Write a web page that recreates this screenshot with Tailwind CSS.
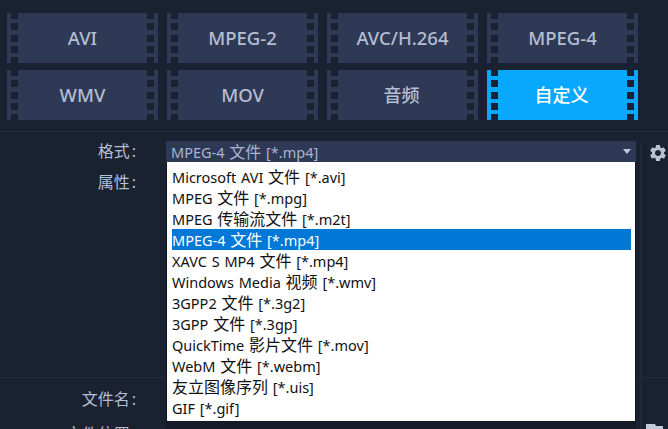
<!DOCTYPE html>
<html lang="zh-CN">

<head>
  <meta charset="UTF-8">
  <title>Export</title>
  <script src="https://cdn.jsdelivr.net/npm/@tailwindcss/browser@4"></script>
</head>

<body class="bg-[#1a2232] overflow-hidden">
  <div class="relative h-[429px] w-[668px] overflow-hidden font-['Noto_Sans','Noto_Sans_CJK_SC',sans-serif]">
    <!-- Format tiles -->
    <div id="tiles" class="grid grid-cols-[repeat(4,151px)] auto-rows-[50px] gap-x-[9px] gap-y-[7px] pl-[7px] pt-[13px]"></div>
    <div class="mt-[11px] h-px bg-[#252e41]"></div>

    <!-- Form -->
    <div class="pt-[9px]">
      <div class="flex h-[21px] items-center">
        <div class="w-[136px] text-right text-[16px] leading-[21px] text-[#b5bdd3]">格式<span class="ml-[2px]">:</span></div>
        <div class="ml-[30px] flex h-[21px] w-[470px] items-center justify-between rounded-t-[2px] bg-[#2e3955] px-[5px]">
          <span class="pt-px text-[14.5px] leading-[21px] text-[#a9b4d2] [word-spacing:1px]">MPEG-4 <span class="text-[16px]">文件</span> [*.mp4]</span>
          <svg width="8" height="5" viewBox="0 0 8 5"><path d="M0 0h8L4 5z" fill="#c3cadc"/></svg>
        </div>
        <svg class="ml-[12px] mt-[3px]" width="20" height="20" viewBox="0 0 24 24" fill="#b9c0d4"><path d="M19.14 12.94c.04-.3.06-.61.06-.94 0-.32-.02-.64-.07-.94l2.03-1.58c.18-.14.23-.41.12-.61l-1.92-3.32c-.12-.22-.37-.29-.59-.22l-2.39.96c-.5-.38-1.03-.7-1.62-.94l-.36-2.54c-.04-.24-.24-.41-.48-.41h-3.84c-.24 0-.43.17-.47.41l-.36 2.54c-.59.24-1.13.57-1.62.94l-2.39-.96c-.22-.08-.47 0-.59.22L2.74 8.87c-.12.21-.08.47.12.61l2.03 1.58c-.05.3-.09.63-.09.94s.02.64.07.94l-2.03 1.58c-.18.14-.23.41-.12.61l1.92 3.32c.12.22.37.29.59.22l2.39-.96c.5.38 1.03.7 1.62.94l.36 2.54c.05.24.24.41.48.41h3.84c.24 0 .44-.17.47-.41l.36-2.54c.59-.24 1.13-.56 1.62-.94l2.39.96c.22.08.47 0 .59-.22l1.92-3.32c.12-.22.07-.47-.12-.61l-2.01-1.58zM12 15.6c-1.98 0-3.6-1.62-3.6-3.6s1.62-3.6 3.6-3.6 3.6 1.62 3.6 3.6-1.62 3.6-3.6 3.6z"/></svg>
      </div>
      <div class="mt-[10px] flex h-[21px] items-center">
        <div class="w-[136px] text-right text-[16px] leading-[21px] text-[#b5bdd3]">属性<span class="ml-[2px]">:</span></div>
      </div>
      <div class="mt-[184px] h-px bg-[#252e41]"></div>
      <div class="mt-[11px] flex h-[21px] items-center">
        <div class="w-[136px] text-right text-[16px] leading-[21px] text-[#b5bdd3]">文件名<span class="ml-[2px]">:</span></div>
      </div>
      <div class="mt-[12px] flex h-[24px] items-start">
        <div class="w-[136px] pt-[2px] text-right text-[16px] leading-[21px] text-[#b5bdd3]">文件位置<span class="ml-[2px]">:</span></div>
        <div class="ml-[30px] h-[24px] w-[470px] bg-[#141a27]"></div>
        <svg class="ml-[10px] mt-[2px]" width="17" height="14" viewBox="0 0 17 14" fill="#c3cadc"><path d="M0 0h9l1 2h7v12H0z"/></svg>
      </div>
    </div>

    <!-- Faint panel edge right of the fields -->
    <div class="absolute bottom-0 left-[640px] top-[141px] w-[2px] bg-[#1f2839]"></div>

    <!-- Open format menu -->
    <ul class="absolute left-[166px] top-[162px] h-[260px] w-[470px] border border-t-0 border-[#11151f] bg-white pl-[5px] pr-[4px] pt-[4px] text-[14.5px] leading-[21px] text-[#111] [word-spacing:1px]">
      <li class="h-[21px] whitespace-nowrap pt-px">Microsoft AVI <span class="text-[16px]">文件</span> [*.avi]</li>
      <li class="h-[21px] whitespace-nowrap pt-px">MPEG <span class="text-[16px]">文件</span> [*.mpg]</li>
      <li class="h-[21px] whitespace-nowrap pt-px">MPEG <span class="text-[16px]">传输流文件</span> [*.m2t]</li>
      <li class="h-[21px] whitespace-nowrap bg-[#0078d7] pt-px text-white">MPEG-4 <span class="text-[16px]">文件</span> [*.mp4]</li>
      <li class="h-[21px] whitespace-nowrap pt-px">XAVC S MP4 <span class="text-[16px]">文件</span> [*.mp4]</li>
      <li class="h-[21px] whitespace-nowrap pt-px">Windows Media <span class="text-[16px]">视频</span> [*.wmv]</li>
      <li class="h-[21px] whitespace-nowrap pt-px">3GPP2 <span class="text-[16px]">文件</span> [*.3g2]</li>
      <li class="h-[21px] whitespace-nowrap pt-px">3GPP <span class="text-[16px]">文件</span> [*.3gp]</li>
      <li class="h-[21px] whitespace-nowrap pt-px">QuickTime <span class="text-[16px]">影片文件</span> [*.mov]</li>
      <li class="h-[21px] whitespace-nowrap pt-px">WebM <span class="text-[16px]">文件</span> [*.webm]</li>
      <li class="h-[21px] whitespace-nowrap pt-px"><span class="text-[16px]">友立图像序列</span> [*.uis]</li>
      <li class="h-[21px] whitespace-nowrap pt-px">GIF [*.gif]</li>
    </ul>
  </div>

  <script>
    const teeth = 'bg-[linear-gradient(to_bottom,transparent_6px,currentColor_6px,currentColor_10px,transparent_10px,transparent_17px,currentColor_17px,currentColor_22px,transparent_22px,transparent_29px,currentColor_29px,currentColor_33px,transparent_33px,transparent_40px,currentColor_40px,currentColor_44px,transparent_44px)]';
    const formats = ['AVI', 'MPEG-2', 'AVC/H.264', 'MPEG-4', 'WMV', 'MOV', '音频', '自定义'];

    document.getElementById('tiles').innerHTML = formats.map((name) => {
      const active = name === '自定义';
      const color = active ? 'text-[#09a8ff]' : 'text-[#2e3955]';
      const fill = active ? 'bg-[#09a8ff] text-white' : 'bg-[#2e3955] text-[#b5bdd3]';
      const edge = active ? 'bg-[#09a8ff]' : 'bg-[#2e3955]';
      const size = /[A-Z]/.test(name) ? 'text-[18.5px]' : 'pr-[2px] text-[18px]';
      return `<div class="flex ${color}">
        <div class="w-[4px] ${edge}"></div>
        <div class="w-[7px] ${teeth}"></div>
        <div class="flex flex-1 items-center justify-center ${size} font-medium ${fill}">${name}</div>
        <div class="w-[7px] ${teeth}"></div>
        <div class="w-[4px] ${edge}"></div>
      </div>`;
    }).join('');
  </script>
</body>

</html>
